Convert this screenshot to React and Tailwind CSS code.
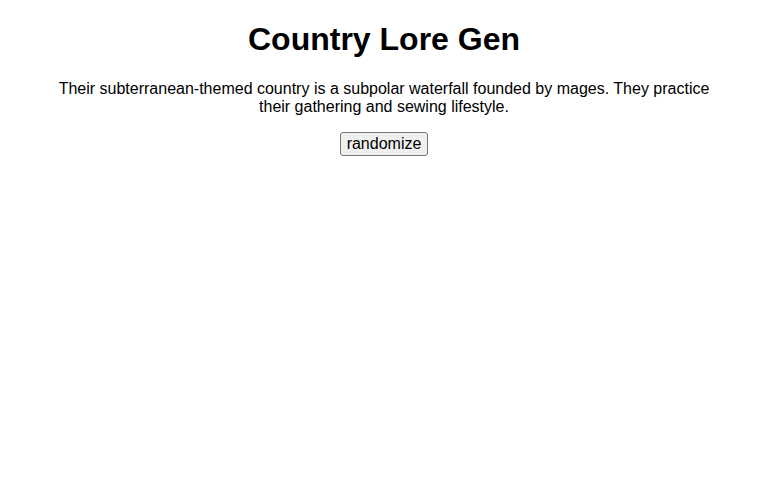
import React, { useState } from 'react';

const lore = 'Their subterranean-themed country is a subpolar waterfall founded by mages. They practice their gathering and sewing lifestyle.';

export default function App() {
    const [text] = useState(lore);

    return (
        <div className="min-h-[480px] bg-white px-2 text-center text-black font-['Liberation_Sans',Arial,sans-serif]">
            <h1 className="pt-[21px] mb-[22px] text-[32px] font-bold leading-[37px]">Country Lore Gen</h1>
            <p className="mx-auto max-w-[668px] text-base leading-[18.4px]">{text}</p>
            <button className="mt-[15px] px-1.5 py-px text-base leading-[20px] bg-[#efefef] border border-[#767676] rounded-[3px]">
                randomize
            </button>
        </div>
    );
}
